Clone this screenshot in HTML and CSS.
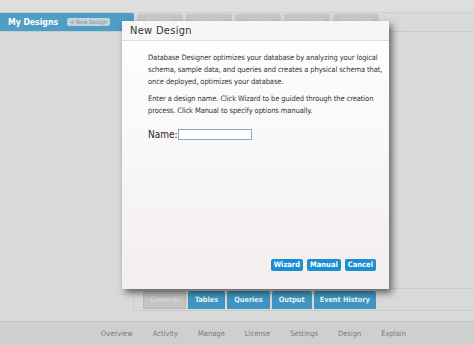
FILE: index.html
```html
<!DOCTYPE html>
<html lang="en">

<head>
    <meta charset="UTF-8">
    <meta name="viewport" content="width=device-width, initial-scale=1.0">
    <link rel="stylesheet" href="styles.css">
</head>

<body>
    <div class="page">
        <div class="top-strip"></div>
        <div class="header">
            <div class="designs-bar">
                <span class="designs-title">My Designs</span>
                <span class="new-design">+ New Design</span>
            </div>
            <div class="ghost-tabs">
                <span class="ghost-tab">Run Design</span>
                <span class="ghost-tab">Deploy Design</span>
                <span class="ghost-tab">Copy Design</span>
                <span class="ghost-tab">Rename Design</span>
                <span class="ghost-tab">Delete Design</span>
            </div>
        </div>

        <div class="workspace">
            <div class="panel">
                <div class="panel-body"></div>
                <div class="detail-tabs">
                    <span class="detail-tab disabled">General</span>
                    <span class="detail-tab">Tables</span>
                    <span class="detail-tab">Queries</span>
                    <span class="detail-tab">Output</span>
                    <span class="detail-tab">Event History</span>
                </div>
            </div>
        </div>

        <div class="bottom-nav">
            <span>Overview</span>
            <span>Activity</span>
            <span>Manage</span>
            <span>License</span>
            <span>Settings</span>
            <span>Design</span>
            <span>Explain</span>
        </div>
    </div>

    <!-- modal dialog sits over the page -->
    <div class="dialog">
        <div class="dialog-title">New Design</div>
        <div class="dialog-body">
            <p>Database Designer optimizes your database by analyzing your logical schema, sample data, and queries and creates a physical schema that, once deployed, optimizes your database.</p>
            <p>Enter a design name. Click Wizard to be guided through the creation process. Click Manual to specify options manually.</p>
            <div class="name-row">
                <label for="design-name">Name:</label>
                <input id="design-name" class="name-input" type="text">
            </div>
            <div class="dialog-buttons">
                <span class="btn">Wizard</span>
                <span class="btn">Manual</span>
                <span class="btn">Cancel</span>
            </div>
        </div>
    </div>
</body>

</html>
```

FILE: styles.css
```css
body {
    margin: 0;
    font-family: "DejaVu Sans Condensed", "Open Sans", sans-serif;
    background: #d9d9d9;
    width: 474px;
    height: 345px;
    overflow: hidden;
}

.page {
    display: flex;
    flex-direction: column;
    height: 345px;
}

.top-strip {
    height: 12px;
    background: #dedede;
    border-bottom: 1px solid #d0d0d0;
}

.header {
    display: flex;
    align-items: flex-start;
    height: 18px;
    border-bottom: 1px solid #c9c9c9;
}

.designs-bar {
    width: 134px;
    height: 18px;
    background: #4f9ec6;
    display: flex;
    align-items: center;
    padding-left: 8px;
    box-sizing: border-box;
    border-radius: 0 2px 2px 0;
}

.designs-title {
    color: #fff;
    font-weight: bold;
    font-size: 8.6px;
    margin-right: 9px;
}

.new-design {
    background: #c5d3da;
    color: #7d9099;
    font-size: 5.8px;
    padding: 1px 3px;
    border-radius: 2px;
}

.ghost-tabs {
    display: flex;
    gap: 3px;
    margin-left: 3px;
    margin-top: 1px;
}

.ghost-tab {
    width: 46px;
    height: 10px;
    background: #c6c6c6;
    color: #d9d9d9;
    font-size: 5px;
    line-height: 10px;
    text-align: center;
    border-radius: 2px;
    overflow: hidden;
    white-space: nowrap;
}

.workspace {
    flex: 1;
    display: flex;
    padding: 0 0 10px 133px;
}

.panel {
    flex: 1;
    display: flex;
    flex-direction: column;
    border-left: 1px solid #cfcfcf;
}

.panel-body {
    flex: 1;
    border-bottom: 1px solid #cbcbcb;
}

.detail-tabs {
    display: flex;
    gap: 2px;
    padding: 2px 0 1px 9px;
    height: 18px;
    border-bottom: 1px solid #cbcbcb;
}

.detail-tab {
    background: #3f97c1;
    color: #e8f2f7;
    font-size: 7.3px;
    font-weight: bold;
    line-height: 18px;
    padding: 0 7px;
    border-radius: 2px 2px 0 0;
}

.detail-tab:last-child {
    padding: 0 6px;
}

.detail-tab.disabled {
    background: #c4c4c4;
    color: #d8d8d8;
    border: 1px solid #b8b8b8;
    line-height: 16px;
    padding: 0 6px;
}

.bottom-nav {
    height: 23px;
    background: #cfcfcf;
    border-top: 1px solid #c4c4c4;
    display: flex;
    align-items: center;
    padding-left: 101px;
    gap: 20px;
    font-size: 7.5px;
    color: #7a7a7a;
}

/* dialog */
.dialog {
    position: absolute;
    left: 122px;
    top: 21px;
    width: 267px;
    height: 268px;
    background: linear-gradient(#ffffff, #f3eeee);
    box-shadow: 3px 4px 7px rgba(0, 0, 0, 0.55);
    display: flex;
    flex-direction: column;
}

.dialog-title {
    height: 19px;
    line-height: 19px;
    padding-left: 8px;
    font-size: 11px;
    letter-spacing: 0.3px;
    color: #333;
    background: #f6f6f6;
    border-bottom: 1px solid #dcdcdc;
}

.dialog-body {
    flex: 1;
    display: flex;
    flex-direction: column;
    padding: 11px 6px 18px 26px;
}

.dialog-body p {
    margin: 0 0 5px 0;
    font-size: 7.5px;
    letter-spacing: -0.1px;
    line-height: 12px;
    color: #333;
}

.name-row {
    display: flex;
    align-items: center;
    margin-top: 7px;
}

.name-row label {
    font-size: 10px;
    color: #222;
}

.name-input {
    width: 72px;
    height: 9px;
    margin-left: 0;
    border: 1px solid #8fa7c6;
    padding: 0;
    background: #fff;
}

.dialog-buttons {
    margin-top: auto;
    display: flex;
    justify-content: flex-end;
    gap: 4px;
    margin-right: 7px;
}

.btn {
    background: #1b8fd0;
    color: #fff;
    font-size: 7.5px;
    font-weight: bold;
    line-height: 12px;
    padding: 0 3px;
    border-radius: 2px;
}
```
